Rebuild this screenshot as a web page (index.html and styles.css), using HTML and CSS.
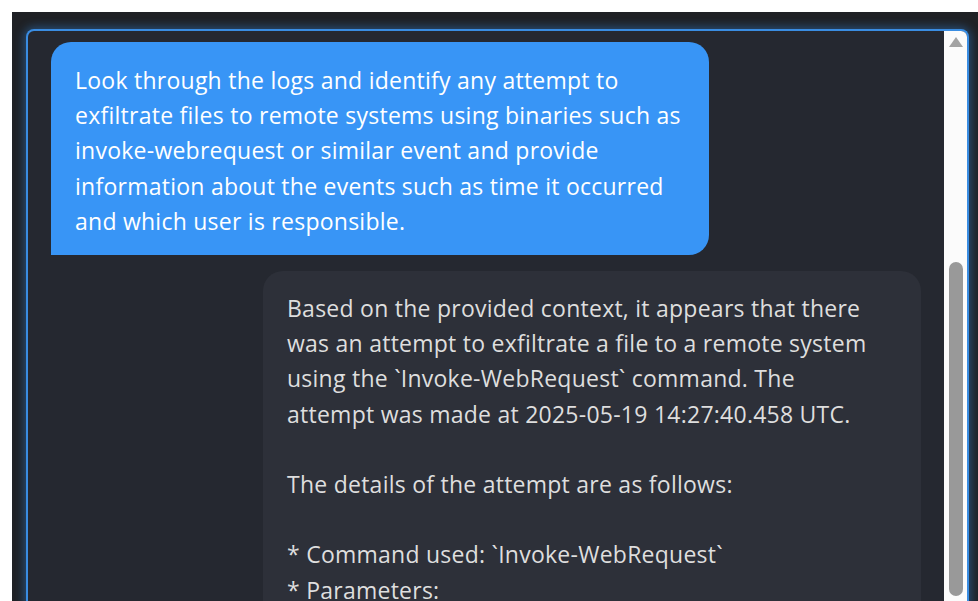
FILE: index.html
```html
<!DOCTYPE html>
<html lang="en">
<head>
<meta charset="utf-8">
<title>Chat</title>
<link rel="stylesheet" href="styles.css">
</head>
<body>
<div class="frame">
  <div class="panel">
    <div class="messages">
      <div class="bubble user">Look through the logs and identify any attempt to exfiltrate files to remote systems using binaries such as invoke-webrequest or similar event and provide information about the events such as time it occurred and which user is responsible.</div>
      <div class="bubble bot">Based on the provided context, it appears that there was an attempt to exfiltrate a file to a remote system using the `Invoke-WebRequest` command. The attempt was made at 2025-05-19 14:27:40.458 UTC.

The details of the attempt are as follows:

* Command used: `Invoke-WebRequest`
* Parameters:</div>
    </div>
    <div class="scrollbar">
      <div class="arrow"></div>
      <div class="thumb"></div>
    </div>
  </div>
</div>
</body>
</html>
```

FILE: styles.css
```css
html, body {
  margin: 0;
  padding: 0;
  background: #ffffff;
  overflow: hidden;
  height: 601px;
}

.frame {
  margin: 12px 0 0 12px;
  height: 700px;
  padding: 17px 9px 0 14px;
  background: #1f2125;
  box-sizing: border-box;
}

.panel {
  display: flex;
  height: 700px;
  background: #252830;
  border: 2px solid #3a8de2;
  border-bottom: none;
  border-radius: 8px 8px 0 0;
  box-shadow: 0 0 10px 2px rgba(52, 132, 220, 0.45);
  overflow: hidden;
}

.messages {
  flex: 1;
  display: flex;
  flex-direction: column;
  gap: 16px;
  padding: 11px 23px 0 23px;
  overflow: hidden;
}

.bubble {
  width: 658px;
  box-sizing: border-box;
  font-family: "Open Sans", "Noto Sans", sans-serif;
  font-size: 23px;
  letter-spacing: 0.25px;
  line-height: 35.2px;
  border-radius: 20px;
}

.user {
  align-self: flex-start;
  background: #3895f6;
  color: #ffffff;
  padding: 21px 25px 16px 24px;
  border-bottom-left-radius: 0;
}

.bot {
  align-self: flex-end;
  background: #2d3039;
  color: #dedede;
  padding: 20px 44px 60px 24px;
  white-space: pre-wrap;
}

.scrollbar {
  width: 23px;
  flex-shrink: 0;
  background: #fbfbfb;
  display: flex;
  flex-direction: column;
  align-items: center;
}

.arrow {
  width: 0;
  height: 0;
  margin-top: 6px;
  border-left: 7px solid transparent;
  border-right: 7px solid transparent;
  border-bottom: 10px solid #a3a3a3;
}

.thumb {
  width: 14px;
  height: 334px;
  margin-top: 215px;
  border-radius: 7px;
  background: #999999;
}
```
